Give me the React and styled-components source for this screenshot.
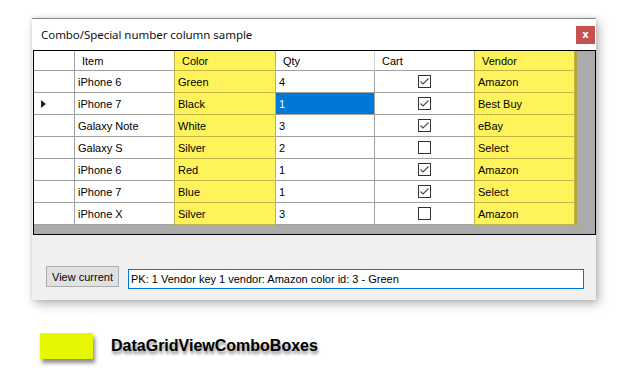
import React from "react";
import styled, { createGlobalStyle } from "styled-components";

const Global = createGlobalStyle`
  html, body { margin: 0; padding: 0; background: #ffffff; }
  body { font-family: "Liberation Sans", Arial, sans-serif; }
`;

const YELLOW = "#fff35c";
const OLIVE = "#c2b445";
const GRID = "#a0a0a0";

const Page = styled.div`
  width: 637px;
  height: 381px;
  padding: 18px 0 0 32px;
  box-sizing: border-box;
  display: flex;
  flex-direction: column;
`;

const Window = styled.div`
  width: 564px;
  height: 282px;
  box-sizing: border-box;
  background: #f0f0f0;
  border-top: 1px solid #8c8c8c;
  box-shadow: 3px 4px 10px rgba(0, 0, 0, 0.28), 0 0 4px rgba(0, 0, 0, 0.12);
  display: flex;
  flex-direction: column;
`;

const TitleBar = styled.div`
  height: 31px;
  background: #ffffff;
  display: flex;
  align-items: flex-start;
  justify-content: space-between;
  padding-left: 9px;
`;

const Title = styled.span`
  font-family: "Noto Sans", "Segoe UI", sans-serif;
  font-size: 11.5px;
  letter-spacing: -0.05px;
  color: #111;
  line-height: 16px;
  margin-top: 8px;
`;

const CloseButton = styled.div`
  width: 19px;
  height: 18px;
  margin-top: 7px;
  margin-right: 1px;
  background: #c75050;
  color: #fff;
  font-family: "DejaVu Sans", sans-serif;
  font-weight: bold;
  font-size: 10px;
  display: flex;
  align-items: center;
  justify-content: center;
  line-height: 1;
`;

const GridFrame = styled.div`
  margin-left: 1px;
  height: 185px;
  box-sizing: border-box;
  border: 1px solid #000;
  background: #ababab;
  display: flex;
  flex-direction: column;
`;

const Grid = styled.div`
  display: grid;
  grid-template-columns: 41px 100px 101px 99px 100px 100px 2px;
  grid-template-rows: 20px repeat(7, 22px);
  width: fit-content;
`;

const Cell = styled.div`
  box-sizing: border-box;
  border-right: 1px solid ${(p) => (p.$yellow ? OLIVE : p.$head ? "#d6d6d6" : GRID)};
  border-bottom: 1px solid ${(p) => (p.$yellow ? OLIVE : GRID)};
  background: ${(p) => (p.$selected ? "#0078d7" : p.$yellow ? YELLOW : "#ffffff")};
  color: ${(p) => (p.$selected ? "#ffffff" : "#000")};
  font-family: "Liberation Sans", Arial, sans-serif;
  font-size: 11px;
  display: flex;
  align-items: center;
  justify-content: ${(p) => (p.$center ? "center" : "flex-start")};
  padding-left: ${(p) => (p.$head ? 7 : p.$center ? 0 : 3)}px;
  white-space: nowrap;
  overflow: hidden;
  ${(p) => (p.$yellow ? `box-shadow: -1px 0 0 ${OLIVE};` : "")}
`;

const RowHeader = styled.div`
  box-sizing: border-box;
  border-right: 1px solid ${GRID};
  border-bottom: 1px solid ${GRID};
  background: #ffffff;
  display: flex;
  align-items: center;
  padding-left: 7px;
`;

const Arrow = styled.div`
  width: 0;
  height: 0;
  border-top: 4px solid transparent;
  border-bottom: 4px solid transparent;
  border-left: 5px solid #222;
`;

const EdgeShade = styled.div`
  background: #b3a53c;
`;

const CheckBox = styled.div`
  width: 13px;
  height: 13px;
  box-sizing: border-box;
  border: 1px solid #333;
  background: #fff;
  display: flex;
`;

const Footer = styled.div`
  display: flex;
  align-items: flex-start;
  padding: 31px 0 0 14px;
`;

const Button = styled.div`
  width: 73px;
  height: 21px;
  box-sizing: border-box;
  background: #e1e1e1;
  border: 1px solid #adadad;
  font-family: "Liberation Sans", Arial, sans-serif;
  font-size: 11px;
  color: #000;
  display: flex;
  align-items: center;
  justify-content: center;
`;

const TextBox = styled.div`
  width: 456px;
  height: 20px;
  margin: 3px 0 0 9px;
  box-sizing: border-box;
  border: 1px solid #0078d7;
  background: #fff;
  font-family: "Liberation Sans", Arial, sans-serif;
  font-size: 11px;
  color: #000;
  display: flex;
  align-items: center;
  padding-left: 2px;
`;

const Legend = styled.div`
  display: flex;
  align-items: center;
  margin-top: 33px;
  padding-left: 8px;
`;

const Swatch = styled.div`
  width: 53px;
  height: 26px;
  background: #e5f802;
  box-shadow: 2px 4px 4px rgba(0, 0, 0, 0.45);
`;

const LegendText = styled.span`
  margin-left: 18px;
  font-family: "Liberation Sans", Arial, sans-serif;
  font-weight: bold;
  font-size: 16px;
  color: #000;
  text-shadow: 1px 3px 3px rgba(0, 0, 0, 0.45);
`;

const Check = ({ on }) => (
  <CheckBox>
    {on && (
      <svg width="11" height="11" viewBox="0 0 11 11">
        <path d="M1.5 5.5 L4 8 L9.5 2.5" fill="none" stroke="#4a4a4a" strokeWidth="1.1" />
      </svg>
    )}
  </CheckBox>
);

const rows = [
  { item: "iPhone 6", color: "Green", qty: "4", cart: true, vendor: "Amazon" },
  { item: "iPhone 7", color: "Black", qty: "1", cart: true, vendor: "Best Buy", current: true },
  { item: "Galaxy Note", color: "White", qty: "3", cart: true, vendor: "eBay" },
  { item: "Galaxy S", color: "Silver", qty: "2", cart: false, vendor: "Select" },
  { item: "iPhone 6", color: "Red", qty: "1", cart: true, vendor: "Amazon" },
  { item: "iPhone 7", color: "Blue", qty: "1", cart: true, vendor: "Select" },
  { item: "iPhone X", color: "Silver", qty: "3", cart: false, vendor: "Amazon" },
];

export default function App() {
  return (
    <>
      <Global />
      <Page>
        <Window>
          <TitleBar>
            <Title>Combo/Special number column sample</Title>
            <CloseButton>x</CloseButton>
          </TitleBar>
          <GridFrame>
            <Grid>
              <RowHeader />
              <Cell $head>Item</Cell>
              <Cell $head $yellow>Color</Cell>
              <Cell $head>Qty</Cell>
              <Cell $head>Cart</Cell>
              <Cell $head $yellow>Vendor</Cell>
              <EdgeShade />
              {rows.map((r, i) => (
                <React.Fragment key={i}>
                  <RowHeader>{r.current && <Arrow />}</RowHeader>
                  <Cell>{r.item}</Cell>
                  <Cell $yellow>{r.color}</Cell>
                  <Cell $selected={r.current}>{r.qty}</Cell>
                  <Cell $center>
                    <Check on={r.cart} />
                  </Cell>
                  <Cell $yellow>{r.vendor}</Cell>
                  <EdgeShade />
                </React.Fragment>
              ))}
            </Grid>
          </GridFrame>
          <Footer>
            <Button>View current</Button>
            <TextBox>PK: 1 Vendor key 1 vendor: Amazon color id: 3 - Green</TextBox>
          </Footer>
        </Window>
        <Legend>
          <Swatch />
          <LegendText>DataGridViewComboBoxes</LegendText>
        </Legend>
      </Page>
    </>
  );
}
